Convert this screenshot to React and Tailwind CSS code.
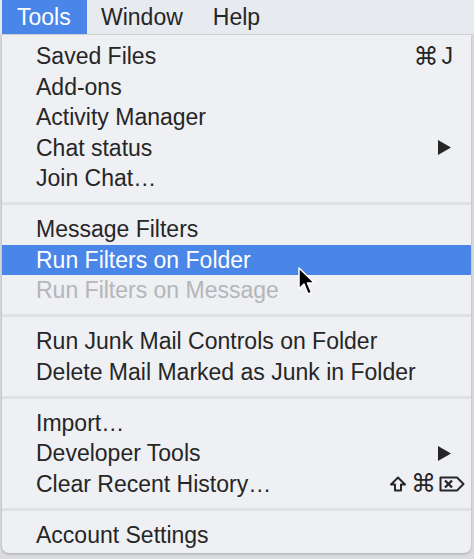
import React from "react";

const ShiftIcon = () => (
  <svg width="16" height="16" viewBox="0 0 16 16" className="shrink-0 mr-[5px]">
    <path
      d="M8 1.5 L15 8.5 L11 8.5 L11 14.5 L5 14.5 L5 8.5 L1 8.5 Z"
      fill="none"
      stroke="#262626"
      strokeWidth="2"
      strokeLinejoin="round"
    />
  </svg>
);

const DeleteFwdIcon = () => (
  <svg width="26" height="16" viewBox="0 0 26 16" className="shrink-0 ml-[3px]">
    <path
      d="M1.5 1.5 L18 1.5 L24.5 8 L18 14.5 L1.5 14.5 Z"
      fill="none"
      stroke="#262626"
      strokeWidth="2"
      strokeLinejoin="round"
    />
    <path d="M6 4.5 L13 11.5 M13 4.5 L6 11.5" stroke="#262626" strokeWidth="2.4" />
  </svg>
);

const sections = [
  [
    { label: "Saved Files", shortcut: true },
    { label: "Add-ons" },
    { label: "Activity Manager" },
    { label: "Chat status", submenu: true },
    { label: "Join Chat…" },
  ],
  [
    { label: "Message Filters" },
    { label: "Run Filters on Folder", active: true },
    { label: "Run Filters on Message", disabled: true },
  ],
  [
    { label: "Run Junk Mail Controls on Folder" },
    { label: "Delete Mail Marked as Junk in Folder" },
  ],
  [
    { label: "Import…" },
    { label: "Developer Tools", submenu: true },
    { label: "Clear Recent History…", clearKeys: true },
  ],
  [{ label: "Account Settings" }],
];

const MenuRow = ({ item }) => {
  const color = item.active
    ? "bg-[#4a86e8] text-white"
    : item.disabled
      ? "text-[#b4b6b9]"
      : "text-[#262626]";
  return (
    <div className={`h-[30.5px] flex items-center pl-[34px] pr-[16px] ${color}`}>
      <span className="flex-1 whitespace-nowrap">{item.label}</span>
      {item.shortcut && (
        <span className="shrink-0 flex items-center mr-[2px]">
          <span className="font-['DejaVu_Sans',sans-serif] text-[25px] leading-none">⌘</span>
          <span className="ml-[3px]">J</span>
        </span>
      )}
      {item.clearKeys && (
        <span className="shrink-0 flex items-center -mr-[10px]">
          <ShiftIcon />
          <span className="font-['DejaVu_Sans',sans-serif] text-[25px] leading-none">⌘</span>
          <DeleteFwdIcon />
        </span>
      )}
      {item.submenu && (
        <svg width="13" height="15" viewBox="0 0 13 15" className="shrink-0 mr-[4px]">
          <path d="M0 0 L13 7.5 L0 15 Z" fill="#262626" />
        </svg>
      )}
    </div>
  );
};

const Cursor = () => (
  <svg
    width="20"
    height="30"
    viewBox="0 0 20 30"
    className="absolute left-[298px] top-[267px]"
  >
    <path
      d="M1 1 L1 22 L6 17 L10 27 L13.5 25.5 L9.5 16 L16.5 16 Z"
      fill="#000"
      stroke="#fff"
      strokeWidth="1.5"
      strokeLinejoin="round"
    />
  </svg>
);

export default function App() {
  return (
    <div className="relative w-[474px] h-[559px] bg-[#dcdde0] overflow-hidden font-['Liberation_Sans',Arial,sans-serif] text-[23px]">
      {/* menu bar */}
      <div className="h-[35px] bg-[#e7eaef] flex items-stretch text-[#262626] border-b border-[#d5d8dc]">
        <div className="ml-[2px] w-[85px] bg-[#4a86e8] text-white flex items-center pl-[15px]">
          Tools
        </div>
        <div className="flex items-center pl-[14px]">Window</div>
        <div className="flex items-center pl-[30px]">Help</div>
      </div>

      {/* dropdown */}
      <div className="ml-[2px] w-[469px] h-[518px] bg-[#eef0f3] rounded-b-[7px] pt-[6px] shadow-[0_1px_3px_rgba(0,0,0,0.25)]">
        {sections.map((group, i) => (
          <div key={i}>
            {i > 0 && (
              <div className="h-[20.5px] flex items-center">
                <div className="w-full h-[3px] bg-[#dfe1e4]" />
              </div>
            )}
            {group.map((item) => (
              <MenuRow key={item.label} item={item} />
            ))}
          </div>
        ))}
      </div>

      <Cursor />
    </div>
  );
}
